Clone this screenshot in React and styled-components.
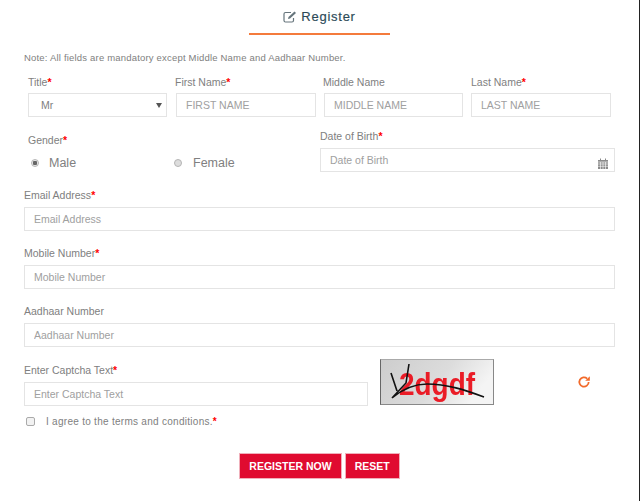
import React from 'react'
import styled, { createGlobalStyle } from 'styled-components'

const GlobalStyle = createGlobalStyle`
  html, body { margin: 0; padding: 0; background: #fff; }
  body { font-family: "Liberation Sans", Arial, sans-serif; color: #808080; }
  * { box-sizing: border-box; }
`

const Req = () => <Star>*</Star>

const App = () => (
  <Page>
    <GlobalStyle />
    <Header>
      <Tab>
        <svg width="14" height="13" viewBox="0 0 14 13" fill="none" stroke="#66757c" strokeWidth="1.2">
          <path d="M10.5 8v2.5a1.5 1.5 0 0 1-1.5 1.5H2.5A1.5 1.5 0 0 1 1 10.5V4a1.5 1.5 0 0 1 1.5-1.5H8" />
          <path d="M5 9l.5-2 6-5.5 1.5 1.5-6 5.5z" fill="#66757c" stroke="none" />
        </svg>
        Register
      </Tab>
    </Header>
    <Note>Note: All fields are mandatory except Middle Name and Aadhaar Number.</Note>
    <NameRow>
      <Field>
        <Label>Title<Req /></Label>
        <SelectBox>Mr<Arrow /></SelectBox>
      </Field>
      <Field>
        <Label>First Name<Req /></Label>
        <NameInput placeholder="FIRST NAME" $x={1} $w={140} />
      </Field>
      <Field>
        <Label>Middle Name</Label>
        <NameInput placeholder="MIDDLE NAME" $x={1} $w={139} />
      </Field>
      <Field>
        <Label>Last Name<Req /></Label>
        <NameInput placeholder="LAST NAME" $x={0} $w={140} />
      </Field>
    </NameRow>
    <GenderRow>
      <GenderCol>
        <Label>Gender<Req /></Label>
        <Radios>
          <RadioItem $gap={10}><Radio $on />Male</RadioItem>
          <RadioItem $gap={11}><Radio />Female</RadioItem>
        </Radios>
      </GenderCol>
      <DobCol>
        <Label>Date of Birth<Req /></Label>
        <DateWrap>
          <Input placeholder="Date of Birth" />
          <CalIcon viewBox="0 0 10 11" width="10" height="11">
            <path fill="#8a8a8a" d="M0 2h2V0.5h1V2h4V0.5h1V2h2v9H0z" />
            <path stroke="#fff" strokeWidth="0.6" d="M0 4h10M0 6h10M0 8.3h10M2.5 4v7M5 4v7M7.5 4v7" />
          </CalIcon>
        </DateWrap>
      </DobCol>
    </GenderRow>
    <Wide $top={17}>
      <Label>Email Address<Req /></Label>
      <Input placeholder="Email Address" />
    </Wide>
    <Wide $top={16}>
      <Label>Mobile Number<Req /></Label>
      <Input placeholder="Mobile Number" />
    </Wide>
    <Wide $top={16}>
      <Label>Aadhaar Number</Label>
      <Input placeholder="Aadhaar Number" />
    </Wide>
    <CaptchaRow>
      <CaptchaField>
        <Label>Enter Captcha Text<Req /></Label>
        <Input placeholder="Enter Captcha Text" />
      </CaptchaField>
      <CaptchaImage>
        <svg width="112" height="44" viewBox="0 0 112 44">
          <defs>
            <linearGradient id="cap" x1="0" x2="1" y1="0" y2="0.3">
              <stop offset="0" stopColor="#cdcdcd" />
              <stop offset="0.6" stopColor="#dcdcdc" />
              <stop offset="1" stopColor="#f4f4f4" />
            </linearGradient>
            <filter id="soft"><feGaussianBlur stdDeviation="0.6" /></filter>
          </defs>
          <rect width="112" height="44" fill="url(#cap)" />
          <text x="18" y="35" fontFamily="Liberation Sans" fontSize="32" fontWeight="700" fill="#ea1c28" textLength="76" lengthAdjust="spacingAndGlyphs" filter="url(#soft)">2dgdf</text>
          <path d="M10 13l6 18 M28 4l-3 19-14 15 M11 38c12-10 24-14 35-14 20 0 38 6 57 13" fill="none" stroke="#111" strokeWidth="1.6" />
        </svg>
      </CaptchaImage>
      <Refresh viewBox="0 0 24 24" width="14" height="14">
        <path d="M20 12a8 8 0 1 1-2.6-5.9" fill="none" stroke="#f26a2a" strokeWidth="3" />
        <path d="M22 2v8h-8z" fill="#f26a2a" />
      </Refresh>
    </CaptchaRow>
    <Agree>
      <Check />
      <AgreeText>I agree to the terms and conditions.<Req /></AgreeText>
    </Agree>
    <Buttons>
      <Button>REGISTER NOW</Button>
      <Button>RESET</Button>
    </Buttons>
  </Page>
)

const Page = styled.div`
  width: 640px;
  height: 501px;
  overflow: hidden;
  background: #fff;
  padding: 0 24px;
  border-right: 1px solid #222;
`
const Header = styled.div`
  display: flex;
  justify-content: center;
  height: 35px;
`
const Tab = styled.div`
  width: 141px;
  height: 35px;
  display: flex;
  align-items: center;
  justify-content: center;
  gap: 4px;
  padding-bottom: 1px;
  border-bottom: 2px solid #f47b3c;
  color: #2c4a57;
  font-size: 13px;
  letter-spacing: 0.75px;
  -webkit-text-stroke: 0.15px #2c4a57;
`
const Note = styled.p`
  margin: 17px 0 0;
  height: 12px;
  font-size: 9.5px;
  line-height: 12px;
  letter-spacing: 0.19px;
  color: #808080;
`
const NameRow = styled.div`
  display: grid;
  grid-template-columns: 139px 140px 140px 140px;
  column-gap: 8px;
  margin: 12px 0 0 4px;
`
const Field = styled.div`
  display: flex;
  flex-direction: column;
`
const Label = styled.label`
  display: block;
  height: 12px;
  margin-bottom: 5px;
  font-size: 10.5px;
  line-height: 12px;
  color: #808080;
  white-space: nowrap;
`
const Star = styled.span`
  color: #f00;
  font-weight: 700;
`
const Input = styled.input`
  display: block;
  width: 100%;
  height: 24px;
  padding: 0 9px;
  border: 1px solid #e4e4e4;
  background: #fff;
  font-family: "Liberation Sans", Arial, sans-serif;
  font-size: 10.5px;
  outline: none;
  &::placeholder { color: #a0a0a0; opacity: 1; }
`
const NameInput = styled(Input)`
  margin-left: ${p => p.$x}px;
  width: ${p => p.$w}px;
`
const SelectBox = styled.div`
  position: relative;
  height: 24px;
  padding-left: 12px;
  border: 1px solid #e4e4e4;
  font-size: 10.5px;
  line-height: 22px;
  color: #808080;
`
const Arrow = styled.span`
  position: absolute;
  right: 4px;
  top: 9px;
  border-left: 3px solid transparent;
  border-right: 3px solid transparent;
  border-top: 5px solid #555;
`
const GenderRow = styled.div`
  display: flex;
  margin-top: 13px;
`
const GenderCol = styled.div`
  width: 296px;
  padding: 4px 0 0 4px;
`
const DobCol = styled.div`
  width: 295px;
  label { margin-bottom: 6px; }
`
const Radios = styled.div`
  display: flex;
  margin-top: 10px;
`
const RadioItem = styled.div`
  display: flex;
  align-items: center;
  gap: ${p => p.$gap}px;
  width: 143px;
  padding-left: 3px;
  font-size: 12.5px;
  line-height: 14px;
  color: #808080;
`
const Radio = styled.span`
  width: 8px;
  height: 8px;
  border-radius: 50%;
  border: 1px solid #b5b5b5;
  background: ${p => (p.$on ? 'radial-gradient(circle, #666 0 2px, #e8e8e8 2.5px)' : '#ddd')};
`
const DateWrap = styled.div`
  position: relative;
`
const CalIcon = styled.svg`
  position: absolute;
  right: 7px;
  top: 10px;
`
const Wide = styled.div`
  margin-top: ${p => p.$top}px;
  width: 591px;
  label { margin-bottom: 6px; }
`
const CaptchaRow = styled.div`
  display: flex;
  align-items: flex-start;
  margin-top: 17px;
  label { margin-bottom: 6px; }
`
const CaptchaField = styled.div`
  width: 344px;
`
const CaptchaImage = styled.div`
  width: 114px;
  height: 46px;
  margin: -5px 0 0 12px;
  border: 1px solid #888;
  border-top-color: #aaa;
  border-left-color: #666;
`
const Refresh = styled.svg`
  margin: 11px 0 0 83px;
`
const Agree = styled.div`
  display: flex;
  align-items: center;
  margin: 9px 0 0 2px;
  height: 12px;
`
const Check = styled.span`
  width: 9px;
  height: 9px;
  border: 1px solid #aaa;
  border-radius: 2px;
  background: #f2f2f2;
`
const AgreeText = styled.span`
  margin-left: 11px;
  font-size: 10px;
  letter-spacing: 0.28px;
  color: #808080;
`
const Buttons = styled.div`
  display: flex;
  justify-content: center;
  gap: 3px;
  margin-top: 26px;
`
const Button = styled.button`
  height: 26px;
  padding: 0 9px;
  border: 1px solid #f0b0bb;
  background: #e00b30;
  color: #fff;
  font-family: "Liberation Sans", Arial, sans-serif;
  font-size: 10.5px;
  font-weight: 700;
  line-height: 24px;
`

export default App
